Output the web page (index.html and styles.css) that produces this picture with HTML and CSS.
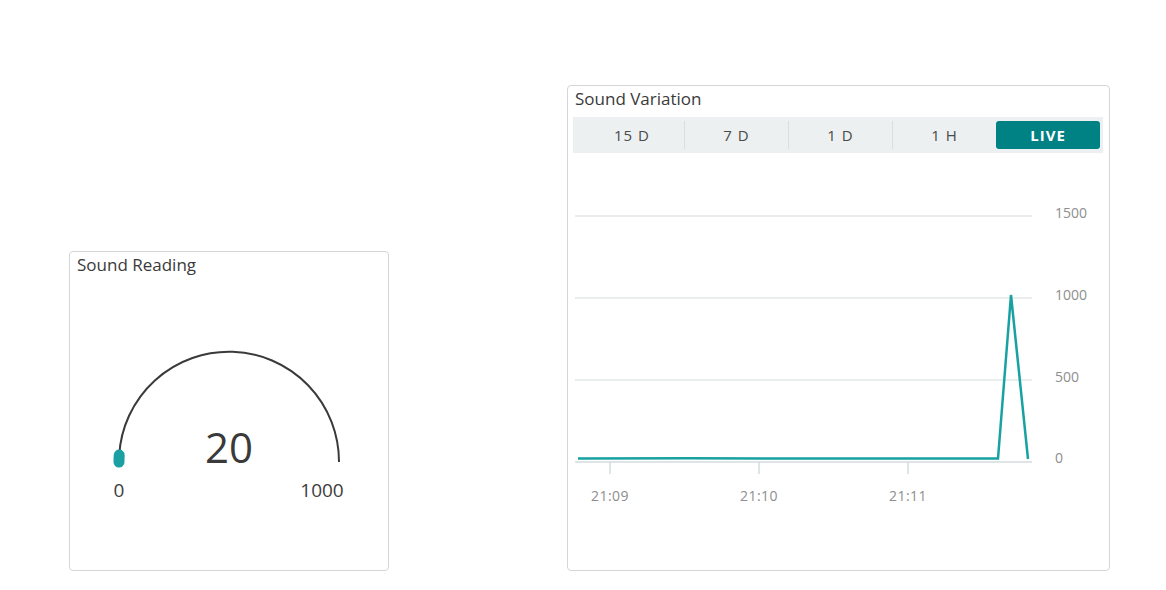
FILE: index.html
```html
<!DOCTYPE html>
<html lang="en">
<head>
<meta charset="utf-8">
<title>Dashboard</title>
<link rel="stylesheet" href="styles.css">
</head>
<body>
<main class="board">
  <section class="card card-gauge">
    <h2 class="card-title">Sound Reading</h2>
    <svg class="gauge" width="318" height="294" viewBox="0 0 318 294">
      <path class="gauge-track" d="M49.2 179.1 A110 110 0 0 1 269 186"/>
      <path class="gauge-value" d="M49 186 A110 110 0 0 1 49.22 179.1"/>
      <text class="gauge-num" x="159" y="187">20</text>
      <text class="gauge-lim" x="49" y="221">0</text>
      <text class="gauge-lim" x="252" y="221">1000</text>
    </svg>
  </section>
  <section class="card card-chart">
    <h2 class="card-title">Sound Variation</h2>
    <div class="tabs">
      <span class="tab">15 D</span>
      <span class="tab">7 D</span>
      <span class="tab">1 D</span>
      <span class="tab">1 H</span>
      <span class="tab tab-live">LIVE</span>
    </div>
    <svg class="chart" width="541" height="417" viewBox="0 0 541 417">
      <g class="grid">
        <line x1="7" y1="63" x2="464" y2="63"/>
        <line x1="7" y1="145" x2="464" y2="145"/>
        <line x1="7" y1="227" x2="464" y2="227"/>
        <line class="axis" x1="7" y1="309" x2="464" y2="309"/>
        <line class="axis" x1="42" y1="309" x2="42" y2="321"/>
        <line class="axis" x1="191" y1="309" x2="191" y2="321"/>
        <line class="axis" x1="340" y1="309" x2="340" y2="321"/>
      </g>
      <g class="ylabels">
        <text x="487" y="65">1500</text>
        <text x="487" y="147">1000</text>
        <text x="487" y="229">500</text>
        <text x="487" y="310">0</text>
      </g>
      <g class="xlabels">
        <text x="42" y="348">21:09</text>
        <text x="191" y="348">21:10</text>
        <text x="340" y="348">21:11</text>
      </g>
      <polyline class="series" points="10,305.5 120,305.3 260,305.6 380,305.4 430,305.5 443,142 460,306"/>
    </svg>
  </section>
</main>
</body>
</html>
```

FILE: styles.css
```css
* {
  box-sizing: border-box;
}

body {
  margin: 0;
  background: #ffffff;
  font-family: "Open Sans", "Noto Sans", "Liberation Sans", sans-serif;
  color: #333333;
}

.board {
  display: flex;
  align-items: flex-end;
  gap: 178px;
  padding: 85px 0 0 69px;
}

.card {
  border: 1px solid #d3d6d8;
  border-radius: 4px;
  background: #ffffff;
  display: flex;
  flex-direction: column;
}

.card-gauge {
  width: 320px;
  height: 320px;
}

.card-chart {
  width: 543px;
  height: 486px;
}

.card-title {
  margin: 0;
  padding: 2px 7px 0;
  height: 24px;
  font-size: 17px;
  line-height: 22px;
  font-weight: 400;
  color: #3a3a3a;
}

.gauge {
  display: block;
}

.gauge-track {
  fill: none;
  stroke: #3a3a3a;
  stroke-width: 2;
}

.gauge-value {
  fill: none;
  stroke: #1aa0a2;
  stroke-width: 11;
  stroke-linecap: round;
}

.gauge-num {
  font-size: 42px;
  fill: #3a3a3a;
  text-anchor: middle;
}

.gauge-lim {
  font-size: 19px;
  fill: #3d3d3d;
  text-anchor: middle;
}

.tabs {
  margin: 7px 6px 0 5px;
  height: 36px;
  padding: 4px 3px 4px 7px;
  background: #ecf0f1;
  display: grid;
  grid-template-columns: repeat(5, 1fr);
}

.tab {
  display: flex;
  align-items: center;
  justify-content: center;
  font-size: 15px;
  letter-spacing: 1px;
  color: #4a4a4a;
  border-left: 1px solid #d9dedf;
}

.tab:first-child {
  border-left: none;
}

.tab-live {
  border-left: none;
  background: #008184;
  color: #ffffff;
  font-weight: 700;
  border-radius: 3px;
}

.chart {
  display: block;
}

.grid line {
  stroke: #e3e7e9;
  stroke-width: 1.5;
}

.grid .axis {
  stroke: #d5dbde;
}

.ylabels text {
  font-size: 14px;
  fill: #8e8e8e;
}

.xlabels text {
  font-size: 14px;
  fill: #8e8e8e;
  text-anchor: middle;
  letter-spacing: 0.5px;
}

.series {
  fill: none;
  stroke: #17a1a1;
  stroke-width: 2.5;
  stroke-linejoin: miter;
}
```
